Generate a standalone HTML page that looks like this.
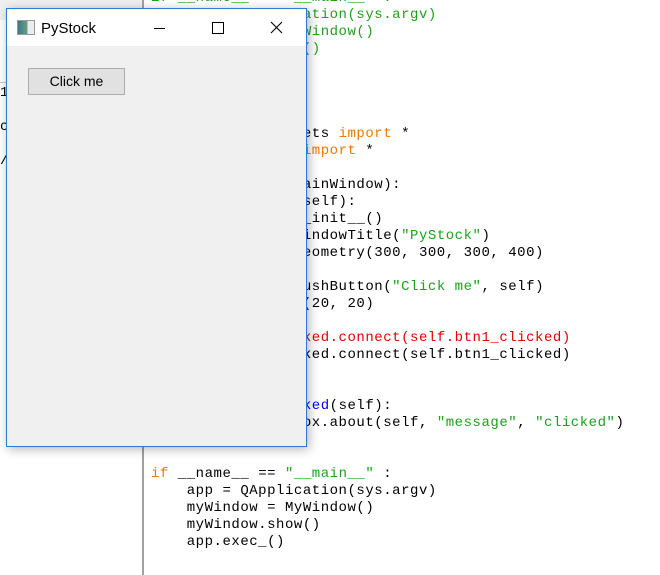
<!DOCTYPE html>
<html><head><style>
body{margin:0;width:660px;height:575px;overflow:hidden;background:#fff;position:relative;font-family:"Liberation Sans",sans-serif}
#left{position:absolute;left:0;top:0;width:142px;height:575px;background:#fff}
#div{position:absolute;left:142px;top:0;width:2px;height:575px;background:#a0a0a0}
pre{position:absolute;left:151px;top:-10px;margin:0;font-family:"Liberation Mono","NanumGothic",monospace;font-size:14px;line-height:17px;letter-spacing:0.53px;color:#000}
.g{color:#1ea01e}.o{color:#f07800}.r{color:#e00000}.b{color:#0000ff}
#win{position:absolute;left:6px;top:8px;width:299px;height:437px;border:1px solid #2b7bd6;background:#f0f0f0;box-shadow:2px 2px 10px rgba(0,0,0,.3)}
#tb{position:absolute;left:0;top:0;width:299px;height:37px;background:#fff}
#btn{position:absolute;left:21px;top:59px;width:95px;height:25px;background:#e1e1e1;border:1px solid #adadad;font-size:14px;text-align:center;line-height:25px}
</style></head><body>
<div id="left">
<div style="position:absolute;left:0;top:0;width:142px;height:20px;background:#f0f0f0"></div>
<div style="position:absolute;left:0;top:82px;width:142px;height:1px;background:#c8c8c8"></div>
<div style="position:absolute;left:0;top:85px;font:14px 'Liberation Mono',monospace;line-height:17px">1<br><br>c<br><br>/</div>
</div>
<div id="div"></div>
<pre><span class="g">if __name__ == "__main__" :
    app = QApplication(sys.argv)
    myWindow = MyWindow()
    myWindow.show()
    app.exec_()</span>



from PyQt5.QtWidgets <span class="o">import</span> *
from PyQt5.QtGui <span class="o">import</span> *

class MyWindow(QMainWindow):
    def __init__(self):
        super().__init__()
        self.setWindowTitle(<span class="g">"PyStock"</span>)
        self.setGeometry(300, 300, 300, 400)

        btn1 = QPushButton(<span class="g">"Click me"</span>, self)
        btn1.move(20, 20)

        <span class="r">btn1.clicked.connect(self.btn1_clicked)</span>
        btn1.clicked.connect(self.btn1_clicked)


    def <span class="b">btn1_clicked</span>(self):
        QMessageBox.about(self, <span class="g">"message"</span>, <span class="g">"clicked"</span>)


<span class="o">if</span> __name__ == <span class="g">"__main__"</span> :
    app = QApplication(sys.argv)
    myWindow = MyWindow()
    myWindow.show()
    app.exec_()</pre>
<div id="win">
<div id="tb">
<div style="position:absolute;left:10px;top:11px;width:16px;height:13px;border:1px solid #999;background:linear-gradient(90deg,#3a7a8a 0,#6aa080 60%,#e8eef0 60%)"></div>
<div style="position:absolute;left:34px;top:11px;font-size:15px;color:#000">PyStock</div>
<div style="position:absolute;left:147px;top:19px;width:11px;height:1px;background:#000"></div>
<div style="position:absolute;left:205px;top:13px;width:10px;height:10px;border:1px solid #000"></div>
<svg style="position:absolute;left:263px;top:12px" width="13" height="13"><path d="M1 1L12 12M12 1L1 12" stroke="#000" stroke-width="1.1"/></svg>
</div>
<div id="btn">Click me</div>
</div>
</body></html>
